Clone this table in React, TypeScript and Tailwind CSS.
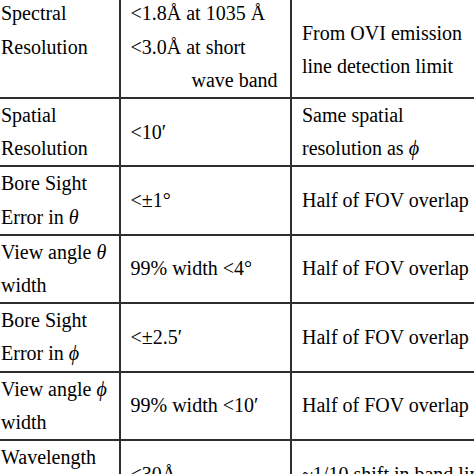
import type { ReactNode } from "react";

type Row = {
  name: ReactNode;
  value: ReactNode;
  note: ReactNode;
};

const Th = () => <i>θ</i>;
const Ph = () => <i>ϕ</i>;

const rows: Row[] = [
  {
    name: (
      <>
        <div>Spectral</div>
        <div>Resolution</div>
        <div>&nbsp;</div>
      </>
    ),
    value: (
      <>
        <div>&lt;1.8Å at 1035 Å</div>
        <div>&lt;3.0Å at short</div>
        <div className="pl-[61px]">wave band</div>
      </>
    ),
    note: (
      <div className="pt-[5px]">
        <div>From OVI emission</div>
        <div>line detection limit</div>
      </div>
    ),
  },
  {
    name: (
      <>
        <div>Spatial</div>
        <div>Resolution</div>
      </>
    ),
    value: <div>&lt;10′</div>,
    note: (
      <>
        <div>Same spatial</div>
        <div>
          resolution as <Ph />
        </div>
      </>
    ),
  },
  {
    name: (
      <>
        <div>Bore Sight</div>
        <div>
          Error in <Th />
        </div>
      </>
    ),
    value: <div>&lt;±1°</div>,
    note: <div>Half of FOV overlap</div>,
  },
  {
    name: (
      <>
        <div>
          View angle <Th />
        </div>
        <div>width</div>
      </>
    ),
    value: <div>99% width &lt;4°</div>,
    note: <div>Half of FOV overlap</div>,
  },
  {
    name: (
      <>
        <div>Bore Sight</div>
        <div>
          Error in <Ph />
        </div>
      </>
    ),
    value: <div>&lt;±2.5′</div>,
    note: <div>Half of FOV overlap</div>,
  },
  {
    name: (
      <>
        <div>
          View angle <Ph />
        </div>
        <div>width</div>
      </>
    ),
    value: <div>99% width &lt;10′</div>,
    note: <div>Half of FOV overlap</div>,
  },
  {
    name: (
      <>
        <div>Wavelength</div>
        <div>Stability</div>
      </>
    ),
    value: <div>&lt;30Å</div>,
    note: <div className="whitespace-nowrap">~1/10 shift in band limit</div>,
  },
];

export default function App() {
  return (
    <div className="w-[474px] h-[474px] overflow-hidden bg-white">
      <div className="ml-[-11px] mt-[-4.6px] w-[520px] font-['Liberation_Serif',serif] text-[20px] leading-[33.2px] text-black">
        {rows.map((r, i) => (
          <div key={i} className="flex border-t-2 border-[#2e2e2e]">
            <div className="w-[129.5px] shrink-0 border-l-2 border-[#2e2e2e] px-[10px] flex flex-col justify-center">
              {r.name}
            </div>
            <div className="w-[171.5px] shrink-0 border-l-2 border-[#2e2e2e] px-[10px] flex flex-col justify-center">
              {r.value}
            </div>
            <div className="w-[210px] shrink-0 border-x-2 border-[#2e2e2e] px-[10px] flex flex-col justify-center">
              {r.note}
            </div>
          </div>
        ))}
      </div>
    </div>
  );
}
